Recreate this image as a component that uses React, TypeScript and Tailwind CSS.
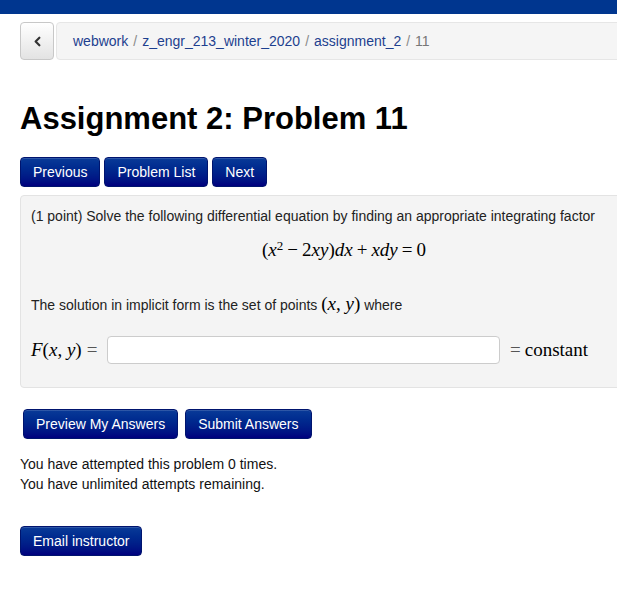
import { ChevronLeft } from "lucide-react";

const btn =
  "inline-flex h-[30px] items-center rounded-[4px] border border-[#00146e] bg-gradient-to-b from-[#0a3a98] to-[#00007e] px-3 text-[14px] text-white shadow-[inset_0_1px_0_rgba(255,255,255,0.15)]";

function Crumb({ children }: { children: string }) {
  return <a className="text-[#1d3f8f]">{children}</a>;
}

function Sep() {
  return <span className="px-[5px] text-[#8a8a8a]">/</span>;
}

function Op({ children }: { children: string }) {
  return <span className="mx-[4px]">{children}</span>;
}

export default function App() {
  const mathFont = { fontFamily: '"Liberation Serif", "Times New Roman", serif' };
  return (
    <div
      className="min-h-screen w-full overflow-hidden bg-white text-[14px] leading-5 text-[#222]"
      style={{ fontFamily: '"Liberation Sans", Arial, sans-serif' }}
    >
      <div className="h-[14px] bg-[#00368f]" />
      <div className="px-5">
        {/* breadcrumb */}
        <div className="mt-2 -mr-8 flex h-[38px]">
          <button className="flex w-[34px] items-center justify-center rounded-[4px] border border-[#c8c8c8] bg-gradient-to-b from-white to-[#e3e3e3] text-[#333]">
            <ChevronLeft size={15} strokeWidth={3.5} />
          </button>
          <div className="ml-[2px] flex flex-1 items-center rounded-[4px] border border-[#e6e6e6] bg-[#f5f5f5] pl-4">
            <Crumb>webwork</Crumb>
            <Sep />
            <Crumb>z_engr_213_winter_2020</Crumb>
            <Sep />
            <Crumb>assignment_2</Crumb>
            <Sep />
            <span className="text-[#777]">11</span>
          </div>
        </div>

        <h1 className="mt-[39px] text-[31px] font-bold leading-10 text-black">Assignment 2: Problem 11</h1>

        <div className="mt-[18px] flex gap-1">
          <button className={btn}>Previous</button>
          <button className={btn}>Problem List</button>
          <button className={btn}>Next</button>
        </div>

        {/* problem */}
        <div className="mt-2 w-[648px] rounded-[4px] border border-[#e3e3e3] bg-[#f4f4f4] p-[10px] pb-[23px]">
          <p>(1 point) Solve the following differential equation by finding an appropriate integrating factor</p>
          <div className="mt-[14px] text-center text-[19px] leading-5 text-black" style={mathFont}>
            (<i>x</i>
            <sup className="text-[13px]">2</sup>
            <Op>−</Op>2<i>xy</i>)<i>dx</i>
            <Op>+</Op>
            <i>xdy</i>
            <Op>=</Op>0
          </div>
          <p className="mt-[34px]">
            The solution in implicit form is the set of points{" "}
            <span className="text-[19px] text-black" style={mathFont}>
              (<i>x</i>, <i>y</i>)
            </span>{" "}
            where
          </p>
          <div className="mt-[21px] flex items-center">
            <span className="w-[76px] text-[19px] text-black" style={mathFont}>
              <i>F</i>(<i>x</i>, <i>y</i>)<span className="ml-[5px] text-[#555]">=</span>
            </span>
            <input className="h-[28px] w-[393px] rounded-[4px] border border-[#cccccc] bg-white" />
            <span className="ml-[10px] text-[19px] text-black" style={mathFont}>
              <span className="mr-[4px] text-[#555]">=</span>constant
            </span>
          </div>
        </div>

        <div className="mt-[21px] ml-[3px] flex gap-[7px]">
          <button className={btn}>Preview My Answers</button>
          <button className={btn}>Submit Answers</button>
        </div>

        <div className="mt-4 leading-[19.5px] text-[#111]">
          <p>You have attempted this problem 0 times.</p>
          <p>You have unlimited attempts remaining.</p>
        </div>

        <div className="mt-[32px]">
          <button className={btn}>Email instructor</button>
        </div>
      </div>
    </div>
  );
}
